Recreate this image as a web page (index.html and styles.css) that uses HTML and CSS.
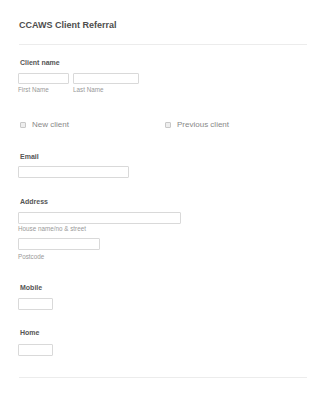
FILE: index.html
```html
<!DOCTYPE html>
<html>
<head>
<meta charset="utf-8">
<link rel="stylesheet" href="styles.css">
</head>
<body>
<div class="form">
  <h1 class="title">CCAWS Client Referral</h1>
  <div class="divider top"></div>

  <div class="label l-name">Client name</div>
  <div class="row inputs-name">
    <div class="col">
      <div class="input w-first"></div>
      <div class="sub">First Name</div>
    </div>
    <div class="col">
      <div class="input w-last"></div>
      <div class="sub">Last Name</div>
    </div>
  </div>

  <div class="options">
    <div class="opt"><span class="box"></span><span>New client</span></div>
    <div class="opt"><span class="box"></span><span>Previous client</span></div>
  </div>

  <div class="label l-email">Email</div>
  <div class="input w-email m-email"></div>

  <div class="label l-address">Address</div>
  <div class="input w-street m-street"></div>
  <div class="sub m-sub1">House name/no &amp; street</div>
  <div class="input w-post m-post"></div>
  <div class="sub m-sub2">Postcode</div>

  <div class="label l-mobile">Mobile</div>
  <div class="input w-phone m-mobile"></div>

  <div class="label l-home">Home</div>
  <div class="input w-phone m-home"></div>

  <div class="divider bottom"></div>
</div>
</body>
</html>
```

FILE: styles.css
```css
html, body {
  margin: 0;
  padding: 0;
  background: #fff;
}
body {
  font-family: "Liberation Sans", Arial, sans-serif;
}
.form {
  padding: 20px 18px 0 18px;
  width: 289px;
}
.title {
  margin: 0;
  padding-left: 1px;
  font-size: 9px;
  line-height: 10px;
  font-weight: bold;
  color: #4d4d4d;
}
.divider {
  height: 1px;
  background: #ececec;
  margin-left: 1px;
}
.divider.top { margin-top: 14px; }
.divider.bottom { margin-top: 21px; }

.label {
  padding-left: 2px;
  font-size: 7px;
  line-height: 8px;
  font-weight: bold;
  color: #555;
}
.l-name { margin-top: 14px; }
.l-email { margin-top: 24px; }
.l-address { margin-top: 20px; }
.l-mobile { margin-top: 24px; }
.l-home { margin-top: 19px; }

.row {
  display: flex;
  gap: 4px;
}
.inputs-name { margin-top: 6px; }

.input {
  box-sizing: border-box;
  height: 12px;
  border: 1px solid #d9d9d9;
  border-radius: 1px;
  background: #fff;
}
.inputs-name .input { height: 11px; }
.w-first { width: 51px; }
.w-last { width: 66px; }
.w-email { width: 111px; }
.w-street { width: 163px; }
.w-post { width: 82px; }
.w-phone { width: 35px; }

.m-email { margin-top: 5px; }
.m-street { margin-top: 6px; }
.m-post { margin-top: 6px; }
.m-mobile { margin-top: 6px; }
.m-home { margin-top: 7px; }

.sub {
  margin-top: 2px;
  font-size: 6.3px;
  line-height: 7px;
  color: #999;
}
.m-sub1 { margin-top: 1px; }
.m-sub2 { margin-top: 3px; }

.options {
  margin-top: 27px;
  padding-left: 2px;
  display: grid;
  grid-template-columns: 145px auto;
}
.opt {
  display: flex;
  align-items: center;
  gap: 6px;
  font-size: 8px;
  line-height: 9px;
  color: #888;
}
.box {
  box-sizing: border-box;
  width: 6px;
  height: 6px;
  border: 1px solid #c8c8c8;
  background: #eee;
  border-radius: 1px;
}
```
